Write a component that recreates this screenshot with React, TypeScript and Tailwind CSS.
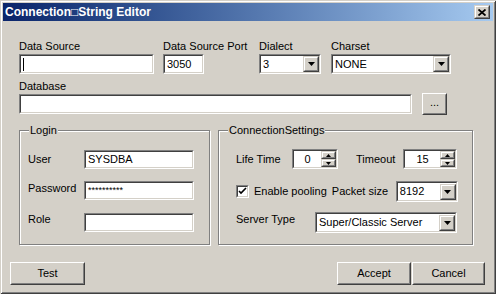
import React from "react";

const font = "font-['Liberation_Sans',Arial,sans-serif]";

const Sunken = ({ className = "", children }: { className?: string; children?: React.ReactNode }) => (
  <div className={`border border-t-[#808080] border-l-[#808080] border-r-white border-b-white ${className}`}>
    <div className="flex h-full w-full items-center border border-t-[#404040] border-l-[#404040] border-r-[#d4d0c8] border-b-[#d4d0c8] bg-white">
      {children}
    </div>
  </div>
);

const Raised = ({ className = "", children }: { className?: string; children?: React.ReactNode }) => (
  <div className={`border border-t-white border-l-white border-r-[#404040] border-b-[#404040] bg-[#d4d0c8] ${className}`}>
    <div className="flex h-full w-full items-center justify-center border border-t-[#d4d0c8] border-l-[#d4d0c8] border-r-[#808080] border-b-[#808080]">
      {children}
    </div>
  </div>
);

const SmallBtn = ({ className = "", children }: { className?: string; children?: React.ReactNode }) => (
  <div className={`border border-t-[#d4d0c8] border-l-[#d4d0c8] border-r-[#404040] border-b-[#404040] bg-[#d4d0c8] ${className}`}>
    <div className="flex h-full w-full items-center justify-center border border-t-white border-l-white border-r-[#808080] border-b-[#808080]">
      {children}
    </div>
  </div>
);

const Arrow = () => (
  <svg width="7" height="4" viewBox="0 0 7 4">
    <path d="M0 0h7L3.5 4z" fill="#000" />
  </svg>
);

const Combo = ({ value, className = "" }: { value: string; className?: string }) => (
  <Sunken className={className}>
    <span className="flex-1 truncate pl-[2px]">{value}</span>
    <SmallBtn className="h-[16px] w-[16px] shrink-0">
      <Arrow />
    </SmallBtn>
  </Sunken>
);

const Spin = ({ value, className = "" }: { value: string; className?: string }) => (
  <Sunken className={className}>
    <span className="flex-1 text-center">{value}</span>
    <div className="flex h-full w-[15px] shrink-0 flex-col">
      <SmallBtn className="h-1/2 w-full">
        <svg width="5" height="3" viewBox="0 0 5 3">
          <path d="M2.5 0L5 3H0z" fill="#000" />
        </svg>
      </SmallBtn>
      <SmallBtn className="h-1/2 w-full">
        <svg width="5" height="3" viewBox="0 0 5 3">
          <path d="M0 0h5L2.5 3z" fill="#000" />
        </svg>
      </SmallBtn>
    </div>
  </Sunken>
);

const Group = ({ title, className = "", children }: { title: string; className?: string; children?: React.ReactNode }) => (
  <div className={`relative border border-[#808080] shadow-[inset_1px_1px_0_#fff,1px_1px_0_#fff] ${className}`}>
    <span className="absolute left-[9px] top-[-7px] bg-[#d4d0c8] px-[1px] leading-[13px]">{title}</span>
    {children}
  </div>
);

export default function App() {
  return (
    <div
      className={`relative h-[294px] w-[496px] overflow-hidden bg-[#d4d0c8] text-[11px] leading-[13px] text-black ${font} shadow-[inset_1px_1px_0_#d4d0c8,inset_-1px_-1px_0_#404040,inset_2px_2px_0_#fff,inset_-2px_-2px_0_#808080]`}
    >
      {/* title bar */}
      <div className="ml-[3px] mt-[3px] flex h-[18px] w-[490px] items-center bg-gradient-to-r from-[#0a246a] to-[#a6caf0] pl-[2px] pr-[3px]">
        <span className="flex-1 text-[12px] font-bold text-white">Connection□String Editor</span>
        <SmallBtn className="h-[14px] w-[16px]">
          <svg width="8" height="7" viewBox="0 0 8 7">
            <path d="M0.5 0.5L7.5 6.5M7.5 0.5L0.5 6.5" stroke="#000" strokeWidth="1.8" />
          </svg>
        </SmallBtn>
      </div>

      {/* row 1 */}
      <div className="mt-[19px] flex pl-[19px]">
        <div className="flex w-[135px] flex-col">
          <span className="h-[13px]">Data Source</span>
          <Sunken className="mt-[1px] h-[20px] w-full">
            <div className="ml-[2px] h-[13px] w-px bg-black" />
          </Sunken>
        </div>
        <div className="ml-[9px] flex w-[41px] flex-col">
          <span className="h-[13px] whitespace-nowrap">Data Source Port</span>
          <Sunken className="mt-[1px] h-[20px] w-full">
            <span className="pl-[2px]">3050</span>
          </Sunken>
        </div>
        <div className="ml-[55px] flex w-[62px] flex-col">
          <span className="h-[13px]">Dialect</span>
          <Combo value="3" className="mt-[1px] h-[20px] w-full" />
        </div>
        <div className="ml-[10px] flex w-[120px] flex-col">
          <span className="h-[13px]">Charset</span>
          <Combo value="NONE" className="mt-[1px] h-[20px] w-full" />
        </div>
      </div>

      {/* database */}
      <div className="mt-[6px] pl-[19px]">
        <span className="block h-[13px]">Database</span>
        <div className="flex items-center">
          <Sunken className="h-[20px] w-[393px]" />
          <Raised className="ml-[10px] h-[22px] w-[25px]">
            <span className="mt-[-3px]">...</span>
          </Raised>
        </div>
      </div>

      {/* groups */}
      <div className="mt-[15px] flex pl-[19px]">
        <Group title="Login" className="h-[115px] w-[191px]">
          <div className="flex flex-col gap-[12px] pl-[8px] pt-[19px]">
            <div className="flex items-center">
              <span className="w-[56px]">User</span>
              <Sunken className="h-[19px] w-[110px]">
                <span className="pl-[2px]">SYSDBA</span>
              </Sunken>
            </div>
            <div className="flex items-center">
              <span className="mt-[-4px] w-[56px]">Password</span>
              <Sunken className="h-[19px] w-[110px]">
                <span className="pl-[2px] text-[9px]">**********</span>
              </Sunken>
            </div>
            <div className="mt-[1px] flex items-center">
              <span className="mt-[-6px] w-[56px]">Role</span>
              <Sunken className="h-[19px] w-[110px]" />
            </div>
          </div>
        </Group>

        <Group title="ConnectionSettings" className="ml-[8px] h-[115px] w-[255px]">
          <div className="flex flex-col pl-[17px] pt-[18px]">
            <div className="flex items-center">
              <span className="w-[56px]">Life Time</span>
              <Spin value="0" className="h-[20px] w-[46px]" />
              <span className="ml-[18px] w-[47px]">Timeout</span>
              <Spin value="15" className="h-[20px] w-[54px]" />
            </div>
            <div className="mt-[12px] flex items-center">
              <Sunken className="h-[13px] w-[13px]">
                <svg width="9" height="9" viewBox="0 0 9 9">
                  <path d="M1 4l2 2 5-5" stroke="#000" strokeWidth="1.6" fill="none" />
                </svg>
              </Sunken>
              <span className="ml-[5px]">Enable pooling</span>
              <span className="ml-[5px] w-[64px]">Packet size</span>
              <Combo value="8192" className="h-[21px] w-[62px]" />
            </div>
            <div className="mt-[10px] flex items-center">
              <span className="mt-[-6px] w-[79px]">Server Type</span>
              <Combo value="Super/Classic Server" className="h-[21px] w-[142px]" />
            </div>
          </div>
        </Group>
      </div>

      {/* buttons */}
      <div className="mt-[17px] flex pl-[10px]">
        <Raised className="h-[23px] w-[75px]">Test</Raised>
        <Raised className="ml-[252px] h-[23px] w-[74px]">Accept</Raised>
        <Raised className="ml-[1px] h-[23px] w-[73px]">Cancel</Raised>
      </div>
    </div>
  );
}
